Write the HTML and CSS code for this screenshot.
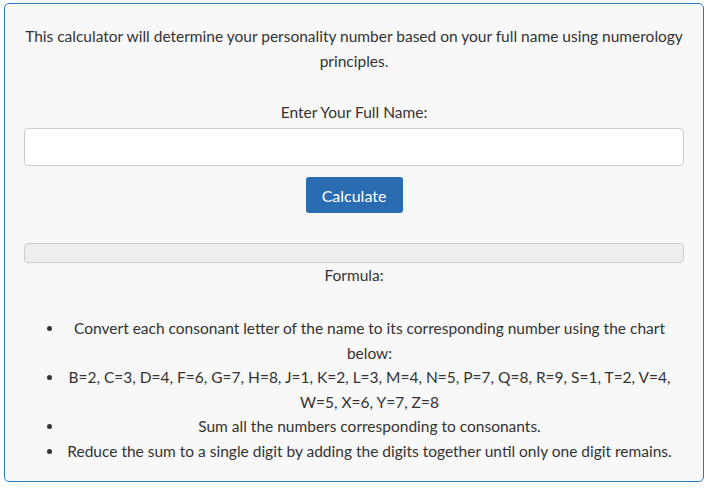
FILE: index.html
```html
<!DOCTYPE html>
<html lang="en">

<head>
    <meta charset="UTF-8">
    <meta name="viewport" content="width=device-width, initial-scale=1.0">
    <title>Personality Number Calculator</title>
    <link rel="stylesheet" href="styles.css">
</head>

<body>
    <div class="calculator">
        <p class="intro">This calculator will determine your personality number based on your full name using numerology principles.</p>

        <label for="full-name" class="name-label">Enter Your Full Name:</label>
        <input type="text" id="full-name" class="name-input">

        <div class="actions">
            <button class="btn-calc">Calculate</button>
        </div>

        <div class="result"></div>

        <p class="formula-title">Formula:</p>
        <ul class="formula">
            <li>Convert each consonant letter of the name to its corresponding number using the chart below:</li>
            <li>B=2, C=3, D=4, F=6, G=7, H=8, J=1, K=2, L=3, M=4, N=5, P=7, Q=8, R=9, S=1, T=2, V=4, W=5, X=6, Y=7, Z=8</li>
            <li>Sum all the numbers corresponding to consonants.</li>
            <li>Reduce the sum to a single digit by adding the digits together until only one digit remains.</li>
        </ul>
    </div>
</body>

</html>
```

FILE: styles.css
```css
html,
body {
    margin: 0;
    padding: 0;
    background: #fff;
}

body {
    padding: 3px 4px 5px 4px;
    font-family: Lato, "Open Sans", sans-serif;
    font-size: 15.5px;
    line-height: 25px;
    color: #333;
}

.calculator {
    border: 1px solid #2b7bc3;
    border-radius: 5px;
    background: #f8f8f8;
    padding: 20px 19px 17px 19px;
    text-align: center;
}

.intro {
    margin: 0 0 26px 0;
}

.name-label {
    display: block;
    margin-bottom: 3px;
}

.name-input {
    display: block;
    box-sizing: border-box;
    width: 100%;
    height: 38px;
    border: 1px solid #ccc;
    border-radius: 4px;
    background: #fff;
    margin: 0;
}

.actions {
    margin-top: 11px;
}

.btn-calc {
    background: #2a6cb2;
    color: #fff;
    border: 0;
    border-radius: 3px;
    font-family: inherit;
    font-size: 16px;
    width: 97px;
    height: 36px;
    padding: 0;
}

.result {
    margin-top: 30px;
    height: 18px;
    border: 1px solid #ccc;
    border-radius: 4px;
    background: #eee;
}

.formula-title {
    margin: 0 0 28px 0;
}

.formula {
    margin: 0;
    padding: 0 9px 0 40px;
    line-height: 24.6px;
}
```
